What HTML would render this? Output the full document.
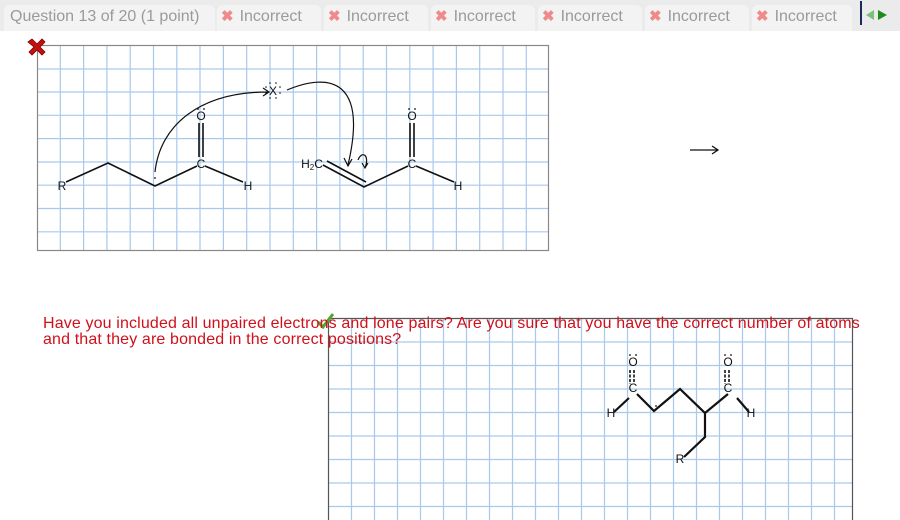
<!DOCTYPE html>
<html><head><meta charset="utf-8"><style>
body{margin:0;width:900px;height:520px;background:#fff;overflow:hidden;font-family:"Liberation Sans",sans-serif;position:relative}
.bar{position:absolute;left:0;top:0;width:900px;height:31px;background:#ebebeb}
.tab{position:absolute;top:5px;height:26px;background:#f3f3f3;border-radius:6px 6px 0 0;color:#9a9a9a;font-size:16px;line-height:24px;white-space:nowrap;overflow:hidden}
.tab .x{color:#f08a8a;font-weight:bold;margin-right:6px;font-size:15px}
.msg{position:absolute;left:43px;top:316px;color:#d0101a;font-size:16px;line-height:16px;z-index:2;white-space:nowrap;letter-spacing:0.14px}
</style></head><body>
<div class="bar"></div>
<div class="tab" style="left:4px;width:205px;padding-left:6px">Question 13 of 20 (1 point)</div>
<div class="tab" style="left:217px;width:100px;padding-left:4px"><span class="x">✖</span>Incorrect</div>
<div class="tab" style="left:324px;width:100px;padding-left:4px"><span class="x">✖</span>Incorrect</div>
<div class="tab" style="left:431px;width:100px;padding-left:4px"><span class="x">✖</span>Incorrect</div>
<div class="tab" style="left:538px;width:100px;padding-left:4px"><span class="x">✖</span>Incorrect</div>
<div class="tab" style="left:645px;width:100px;padding-left:4px"><span class="x">✖</span>Incorrect</div>
<div class="tab" style="left:752px;width:96px;padding-left:4px"><span class="x">✖</span>Incorrect</div>
<div style="position:absolute;left:860px;top:1px;width:2px;height:24px;background:#1a2a5a"></div>
<svg style="position:absolute;left:0;top:0" width="900" height="520">
<polygon points="866,15 874,10 874,20" fill="#7ac07a"/>
<polygon points="878,10 887,15 878,20" fill="#1c8c1c"/>
<g stroke="#a9c9ec" stroke-width="1.2">
<path d="M60.3 45V251M83.6 45V251M106.9 45V251M130.2 45V251M153.5 45V251M176.8 45V251M200 45V251M223.4 45V251M246.7 45V251M270 45V251M293.3 45V251M316.6 45V251M339.9 45V251M363.2 45V251M386.5 45V251M409.8 45V251M433.1 45V251M456.4 45V251M479.7 45V251M503 45V251M526.3 45V251"/>
<path d="M37 69H549M37 92H549M37 115.3H549M37 138.6H549M37 162H549M37 185.2H549M37 208.5H549M37 231.8H549"/>
<path d="M351.5 318V520M374.5 318V520M397.5 318V520M420.5 318V520M443.5 318V520M466.5 318V520M489.5 318V520M512.5 318V520M535.5 318V520M558.5 318V520M581.5 318V520M604.5 318V520M627.5 318V520M650.5 318V520M673.5 318V520M696.5 318V520M719.5 318V520M742.5 318V520M765.5 318V520M788.5 318V520M811.5 318V520M834.5 318V520"/>
<path d="M328 342H853M328 365.5H853M328 389H853M328 412.5H853M328 436H853M328 459.5H853M328 483H853M328 506.5H853"/>
</g>
<rect x="37.5" y="45.5" width="511" height="205" fill="none" stroke="#888" stroke-width="1.2"/>
<path d="M328.5 520V318.5H852.5V520" fill="none" stroke="#555" stroke-width="1.2"/>
<g fill="#c41010" stroke="#7a0000" stroke-width="0.8"><path d="M28 42l4-3 5 5 5-5 3 3-5 5 5 5-3 3-5-5-5 5-3-3 5-5z"/></g>
<path d="M318 322l5 5 10-13" stroke="#4caa2a" stroke-width="3" fill="none"/>
<g stroke="#111" stroke-width="1.6" fill="none">
<path d="M66 182L108 163L155 186L197 166M205 166L243 182"/>
<path d="M199 123V157M203 123V157"/>
<path d="M323 165L364 187L408 166M416 166L454 182M327 161L366 182"/>
<path d="M410 123V157M414 123V157"/>
<path d="M155 172C160 125 200 92 268 92M263 88l6 4-6 4" stroke-width="1.2"/>
<path d="M287 90C330 72 368 80 348 165M344 158l4 8 4-7" stroke-width="1.2"/>
<path d="M358 160C362 150 370 155 365 168M362 163l3 5 3-5" stroke-width="1.2"/>
<path d="M614 412L629 398M637 394L654 411L680 389L705 413L728 394M737 398L749 412M705 413V437L684 457" stroke-width="2.2"/>
<path d="M630 370V384M634 370V384M725 370V384M729 370V384" stroke-dasharray="3 1.5"/>
<path d="M690 150H718M712 146l6 4-6 4" stroke-width="1.3"/>
</g>
<g font-family="Liberation Sans,sans-serif" font-size="12" fill="#111" text-anchor="middle">
<text x="62" y="190">R</text><text x="201" y="168">C</text><text x="248" y="190">H</text><text x="201" y="120">O</text>
<text x="273" y="95">X</text><text x="312" y="168">H<tspan font-size="8" dy="2">2</tspan><tspan dy="-2">C</tspan></text>
<text x="412" y="168">C</text><text x="458" y="190">H</text><text x="412" y="120">O</text>
<text x="611" y="417">H</text><text x="633" y="392">C</text><text x="633" y="366">O</text>
<text x="751" y="417">H</text><text x="728" y="392">C</text><text x="728" y="366">O</text><text x="680" y="463">R</text>
</g>
<g fill="#111"><circle cx="198" cy="109" r=".9"/><circle cx="204" cy="109" r=".9"/><circle cx="409" cy="109" r=".9"/><circle cx="415" cy="109" r=".9"/><circle cx="155" cy="178" r=".9"/><circle cx="266" cy="87" r=".8"/><circle cx="266" cy="93" r=".8"/><circle cx="280" cy="87" r=".8"/><circle cx="280" cy="93" r=".8"/><circle cx="270" cy="83" r=".8"/><circle cx="276" cy="83" r=".8"/><circle cx="270" cy="98" r=".8"/><circle cx="276" cy="98" r=".8"/><circle cx="630" cy="355" r=".9"/><circle cx="636" cy="355" r=".9"/><circle cx="725" cy="355" r=".9"/><circle cx="731" cy="355" r=".9"/><circle cx="656" cy="406" r=".9"/></g>
</svg>
<div class="msg">Have you included all unpaired electrons and lone pairs? Are you sure that you have the correct number of atoms<br>and that they are bonded in the correct positions?</div>
</body></html>
